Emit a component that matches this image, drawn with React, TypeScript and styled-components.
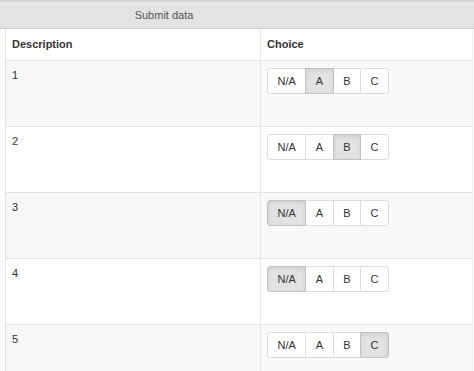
import React from "react";
import styled, { createGlobalStyle } from "styled-components";

const Global = createGlobalStyle`
  html, body { margin: 0; padding: 0; background: #fff; }
  body {
    font-family: "Liberation Sans", Arial, sans-serif;
    font-size: 11px;
    color: #333;
  }
`;

const Page = styled.div`
  width: 474px;
  height: 371px;
  overflow: hidden;
`;

const Bar = styled.div`
  display: flex;
  height: 26px;
  border-top: 2px solid #d3d3d3;
  border-bottom: 1px solid #cbcbcb;
  background: linear-gradient(#e9e9e9 0, #e9e9e9 2px, #e3e3e3 3px, #e3e3e3 100%);
`;

const SubmitButton = styled.button`
  width: 328px;
  height: 26px;
  padding: 0;
  border: 0;
  background: transparent;
  font-family: inherit;
  font-size: 11px;
  line-height: 26px;
  color: #555;
  text-align: center;
  cursor: pointer;
`;

const Table = styled.div`
  margin-left: 5px;
  width: 468px;
  border-left: 1px solid #e4e4e4;
  border-right: 1px solid #f0f0f0;
  box-sizing: border-box;
`;

const Row = styled.div<{ $striped?: boolean; $height: number }>`
  display: grid;
  grid-template-columns: 254px 1fr;
  height: ${(p) => p.$height}px;
  box-sizing: border-box;
  border-top: 1px solid #e2e2e2;
  background: ${(p) => (p.$striped ? "#f8f8f8" : "#fff")};
`;

const Cell = styled.div<{ $head?: boolean; $divider?: boolean }>`
  padding: ${(p) => (p.$head ? "7px 6px" : "6px 6px")};
  line-height: 16px;
  font-weight: ${(p) => (p.$head ? 700 : 400)};
  border-left: ${(p) => (p.$divider ? "1px solid #e6e6e6" : "0")};
`;

const ChoiceCell = styled(Cell)`
  padding-top: 7px;
`;

const Group = styled.div`
  display: inline-flex;
`;

const Seg = styled.button<{ $active?: boolean }>`
  height: 26px;
  padding: 0 9.5px;
  margin: 0 0 0 -1px;
  border: 1px solid ${(p) => (p.$active ? "#c2c2c2" : "#dcdcdc")};
  background: ${(p) => (p.$active ? "#e2e2e2" : "#fff")};
  box-shadow: ${(p) => (p.$active ? "inset 0 2px 4px rgba(0,0,0,0.08)" : "none")};
  font-family: inherit;
  font-size: 11px;
  color: #333;
  position: relative;
  z-index: ${(p) => (p.$active ? 1 : 0)};
  cursor: pointer;
  &:first-child {
    margin-left: 0;
    border-radius: 3px 0 0 3px;
  }
  &:last-child {
    border-radius: 0 3px 3px 0;
  }
`;

const options = ["N/A", "A", "B", "C"];
const rows = [
  { id: "1", choice: "A" },
  { id: "2", choice: "B" },
  { id: "3", choice: "N/A" },
  { id: "4", choice: "N/A" },
  { id: "5", choice: "C" },
];

export default function App() {
  return (
    <Page>
      <Global />
      <Bar>
        <SubmitButton>Submit data</SubmitButton>
      </Bar>
      <Table>
        <Row $height={31} style={{ borderTop: "0" }}>
          <Cell $head>Description</Cell>
          <Cell $head $divider>
            Choice
          </Cell>
        </Row>
        {rows.map((r, i) => (
          <Row key={r.id} $height={66} $striped={i % 2 === 0}>
            <Cell>{r.id}</Cell>
            <ChoiceCell $divider>
              <Group>
                {options.map((o) => (
                  <Seg key={o} $active={o === r.choice}>
                    {o}
                  </Seg>
                ))}
              </Group>
            </ChoiceCell>
          </Row>
        ))}
      </Table>
    </Page>
  );
}
